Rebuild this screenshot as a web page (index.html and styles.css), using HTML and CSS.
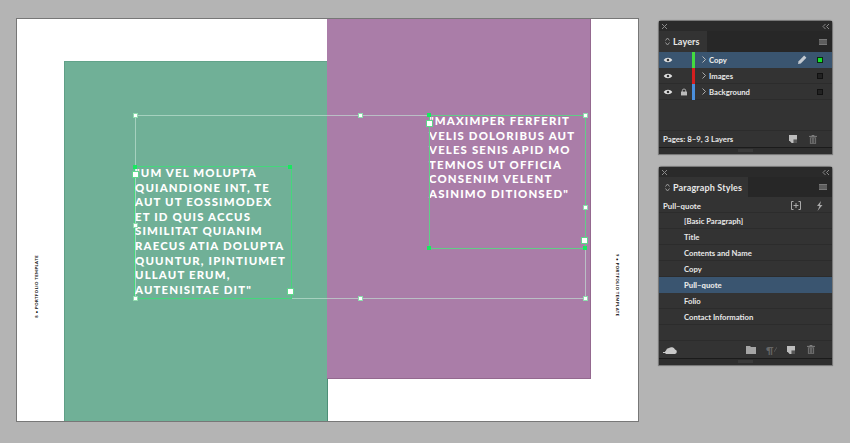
FILE: index.html
```html
<!DOCTYPE html>
<html lang="en">
<head>
<meta charset="utf-8">
<title>Pull-quote spread</title>
<link rel="stylesheet" href="styles.css">
</head>
<body>
<main class="workspace">
  <section class="spread">
    <div class="block block-green"></div>
    <div class="block block-purple"></div>
    <div class="folio folio-left">8 &bull; PORTFOLIO TEMPLATE</div>
    <div class="folio folio-right">9 &bull; PORTFOLIO TEMPLATE</div>

    <div class="group-frame"></div>
    <span class="h h-s g1"></span><span class="h h-s g2"></span><span class="h h-s g3"></span><span class="h h-s g4"></span><span class="h h-s g5"></span>

    <div class="quote quote-left">"UM VEL MOLUPTA<br>QUIANDIONE INT, TE<br>AUT UT EOSSIMODEX<br>ET ID QUIS ACCUS<br>SIMILITAT QUIANIM<br>RAECUS ATIA DOLUPTA<br>QUUNTUR, IPINTIUMET<br>ULLAUT ERUM,<br>AUTENISITAE DIT"</div>
    <div class="text-frame frame-left"></div>
    <span class="h h-d l1"></span><span class="h h-d l2"></span><span class="h h-s l3"></span><span class="h h-s l4"></span><span class="h h-l l5"></span><span class="h h-l l6"></span>

    <div class="quote quote-right">"MAXIMPER FERFERIT<br>VELIS DOLORIBUS AUT<br>VELES SENIS APID MO<br>TEMNOS UT OFFICIA<br>CONSENIM VELENT<br>ASINIMO DITIONSED"</div>
    <div class="text-frame frame-right"></div>
    <span class="h h-d r1"></span><span class="h h-s r2"></span><span class="h h-d r3"></span><span class="h h-d r4"></span><span class="h h-s r5"></span><span class="h h-l r6"></span><span class="h h-l r7"></span>
  </section>
</main>

<aside class="docks">
  <section class="panel panel-layers">
    <header class="panel-top">
      <svg class="ico" width="7" height="7" viewBox="0 0 7 7"><path d="M1 1l5 5M6 1L1 6" stroke="#8a8a8a" fill="none"/></svg>
      <svg class="ico" width="8" height="7" viewBox="0 0 8 7"><path d="M3.500 1L1 3.500 3.500 6M7 1L4.500 3.500 7 6" stroke="#8a8a8a" fill="none"/></svg>
    </header>
    <div class="tabs">
      <div class="tab tab-layers">
        <svg class="updown" width="5" height="9" viewBox="0 0 5 9"><path d="M.5 3.500L2.500 1l2 2.500M.5 5.500L2.500 8l2-2.500" stroke="#9a9a9a" fill="none"/></svg>
        <span>Layers</span>
      </div>
      <svg class="menu" width="8" height="6" viewBox="0 0 8 6"><rect width="8" height="6" fill="#777"/><path d="M0 2h8M0 4h8" stroke="#444"/></svg>
    </div>
    <div class="layer-row selected">
      <span class="eye-cell"><svg width="10" height="6" viewBox="0 0 11 7"><path d="M.5 3.500C3 0 8 0 10.500 3.500 8 7 3 7 .5 3.500z" fill="#e0e0e0"/><circle cx="5.500" cy="3.500" r="1.500" fill="#333"/></svg></span>
      <span class="lock-cell"></span>
      <span class="swatch c-green"></span>
      <svg class="chev" width="4" height="7" viewBox="0 0 4 7"><path d="M.5.500l3 3-3 3" stroke="#bbb" fill="none"/></svg>
      <span class="layer-name strong">Copy</span>
      <svg class="pen" width="9" height="9" viewBox="0 0 9 9"><path d="M0 9l.6-2.800L6.200.6l2.200 2.200L2.800 8.400z" fill="#c4cad1"/></svg>
      <span class="target on"></span>
    </div>
    <div class="layer-row">
      <span class="eye-cell"><svg width="10" height="6" viewBox="0 0 11 7"><path d="M.5 3.500C3 0 8 0 10.500 3.500 8 7 3 7 .5 3.500z" fill="#e0e0e0"/><circle cx="5.500" cy="3.500" r="1.500" fill="#333"/></svg></span>
      <span class="lock-cell"></span>
      <span class="swatch c-red"></span>
      <svg class="chev" width="4" height="7" viewBox="0 0 4 7"><path d="M.5.500l3 3-3 3" stroke="#aaa" fill="none"/></svg>
      <span class="layer-name">Images</span>
      <span class="target"></span>
    </div>
    <div class="layer-row">
      <span class="eye-cell"><svg width="10" height="6" viewBox="0 0 11 7"><path d="M.5 3.500C3 0 8 0 10.500 3.500 8 7 3 7 .5 3.500z" fill="#e0e0e0"/><circle cx="5.500" cy="3.500" r="1.500" fill="#333"/></svg></span>
      <span class="lock-cell"><svg width="6" height="8" viewBox="0 0 7 8"><path d="M1.500 4V2.500a2 2 0 0 1 4 0V4" stroke="#bbb" fill="none"/><rect y="3.500" width="7" height="4.500" fill="#bbb"/></svg></span>
      <span class="swatch c-blue"></span>
      <svg class="chev" width="4" height="7" viewBox="0 0 4 7"><path d="M.5.500l3 3-3 3" stroke="#aaa" fill="none"/></svg>
      <span class="layer-name">Background</span>
      <span class="target"></span>
    </div>
    <div class="spacer"></div>
    <footer class="panel-foot">
      <span class="foot-text">Pages: 8&ndash;9, 3 Layers</span>
      <svg class="new-ic" width="8" height="8" viewBox="0 0 9 9"><path d="M0 0h9v9H3L0 6z" fill="#bdbdbd"/><path d="M5 5h4v4H5z" fill="#555"/></svg>
      <svg class="trash-ic" width="8" height="9" viewBox="0 0 9 10"><path d="M3 .5h3M0 1.500h9" stroke="#888"/><path d="M1 2.500h7V10H1z" fill="#6c6c6c"/><path d="M3 3.500V9M6 3.500V9" stroke="#3a3a3a"/></svg>
    </footer>
    <div class="panel-grip"><span></span></div>
  </section>

  <section class="panel panel-styles">
    <header class="panel-top">
      <svg class="ico" width="7" height="7" viewBox="0 0 7 7"><path d="M1 1l5 5M6 1L1 6" stroke="#8a8a8a" fill="none"/></svg>
      <svg class="ico" width="8" height="7" viewBox="0 0 8 7"><path d="M3.500 1L1 3.500 3.500 6M7 1L4.500 3.500 7 6" stroke="#8a8a8a" fill="none"/></svg>
    </header>
    <div class="tabs tabs-styles">
      <div class="tab tab-styles">
        <svg class="updown" width="5" height="9" viewBox="0 0 5 9"><path d="M.5 3.500L2.500 1l2 2.500M.5 5.500L2.500 8l2-2.500" stroke="#9a9a9a" fill="none"/></svg>
        <span>Paragraph Styles</span>
      </div>
      <svg class="menu" width="8" height="6" viewBox="0 0 8 6"><rect width="8" height="6" fill="#777"/><path d="M0 2h8M0 4h8" stroke="#444"/></svg>
    </div>
    <div class="style-head">
      <span class="style-current">Pull&ndash;quote</span>
      <svg class="plus-ic" width="10" height="9" viewBox="0 0 10 9"><path d="M2.500.5H.5v8h2M7.500.5h2v8h-2M5 2v5M2.500 4.500h5" stroke="#aaa" fill="none"/></svg>
      <svg class="bolt-ic" width="7" height="10" viewBox="0 0 7 10"><path d="M5 0L1 5h2.500L1.500 10 6.500 4H4z" fill="#aaa"/></svg>
    </div>
    <ul class="style-list">
      <li>[Basic Paragraph]</li>
      <li>Title</li>
      <li>Contents and Name</li>
      <li>Copy</li>
      <li class="selected">Pull&ndash;quote</li>
      <li>Folio</li>
      <li>Contact Information</li>
    </ul>
    <div class="spacer"></div>
    <footer class="panel-foot foot-styles">
      <svg class="cloud-ic" width="14" height="8" viewBox="0 0 14 8"><path d="M3 8a2 2 0 0 1 0-3.500A3 3 0 0 1 6 2a4 4 0 0 1 6 1.500A2.300 2.300 0 0 1 12 8z" fill="#c8c8c8"/><path d="M0 6.500h3" stroke="#c8c8c8"/></svg>
      <svg class="folder-ic" width="10" height="8" viewBox="0 0 10 8"><path d="M0 0h4l1 1h5v7H0z" fill="#a5a5a5"/></svg>
      <span class="para-ic">&para;<svg width="5" height="7" viewBox="0 0 5 7"><path d="M0 7L4.500 0" stroke="#666" fill="none"/></svg></span>
      <svg class="new-ic2" width="8" height="8" viewBox="0 0 9 9"><path d="M0 0h9v9H3L0 6z" fill="#bdbdbd"/><path d="M5 5h4v4H5z" fill="#555"/></svg>
      <svg class="trash-ic2" width="8" height="9" viewBox="0 0 9 10"><path d="M3 .5h3M0 1.500h9" stroke="#888"/><path d="M1 2.500h7V10H1z" fill="#6c6c6c"/><path d="M3 3.500V9M6 3.500V9" stroke="#3a3a3a"/></svg>
    </footer>
    <div class="panel-grip"><span></span></div>
  </section>
</aside>
</body>
</html>
```
FILE: styles.css
```css
* { box-sizing: border-box; }
html, body { margin: 0; height: 100%; }
body {
  width: 850px;
  height: 443px;
  overflow: hidden;
  background: #b4b4b4;
  display: flex;
  font-family: "Lato", "Liberation Sans", sans-serif;
}
.workspace {
  width: 659px;
  padding: 19px 0 0 17px;
  flex: none;
}
.spread {
  position: relative;
  width: 621px;
  height: 402px;
  background: #fff;
  box-shadow: 0 0 0 1px #777;
}
.block { position: absolute; }
.block-green { left: 47px; top: 42px; width: 264px; height: 360px; background: #70b097; border-right: 1px solid #4d8f77; border-left: 1px solid #5f9f87; border-top: 1px solid #62a38a; }
.block-purple { left: 310px; top: 0; width: 264px; height: 360px; background: #aa7da8; border-right: 1px solid #94688f; border-bottom: 1px solid #94688f; }
.folio {
  position: absolute;
  writing-mode: vertical-rl;
  font-size: 4.100px;
  font-weight: 900;
  letter-spacing: .5px;
  line-height: 5px;
  color: #111;
  white-space: nowrap;
}
.folio-left { left: 17px; top: 236px; transform: rotate(180deg); }
.folio-right { left: 598px; top: 235px; }

.group-frame { position: absolute; left: 118px; top: 96px; width: 451px; height: 184px; border: 1px solid rgba(195, 228, 212, .65); }
.text-frame { position: absolute; border: 1px solid #45d77c; }
.frame-left { left: 117px; top: 147px; width: 158px; height: 133px; }
.frame-right { left: 412px; top: 96px; width: 157px; height: 134px; border-color: #62cc88; }

.quote {
  position: absolute;
  color: #fff;
  font-weight: 900;
  font-size: 11.400px;
  line-height: 14.600px;
  letter-spacing: 1.150px;
  white-space: nowrap;
}
.quote-left { left: 118px; top: 147px; }
.quote-right { left: 412px; top: 95px; line-height: 14.500px; }

.h { position: absolute; display: block; }
.h-s { width: 5px; height: 5px; background: #fff; border: 1px solid #8fdcae; margin: -2px 0 0 -2px; }
.h-d { width: 4px; height: 4px; background: #18e85f; margin: -2px 0 0 -2px; }
.h-l { width: 7px; height: 7px; background: #fff; border: 1px solid #5fd68b; margin: -3px 0 0 -3px; }
.g1 { left: 118px; top: 96px; }
.g2 { left: 343px; top: 96px; }
.g3 { left: 343px; top: 279px; }
.g4 { left: 568px; top: 279px; }
.g5 { left: 118px; top: 279px; }
.l1 { left: 118px; top: 148px; }
.l2 { left: 273px; top: 148px; }
.l3 { left: 118px; top: 206px; }
.l4 { left: 118px; top: 279px; }
.l5 { left: 118px; top: 155px; }
.l6 { left: 273px; top: 272px; }
.r1 { left: 412px; top: 96px; }
.r2 { left: 568px; top: 96px; }
.r3 { left: 412px; top: 229px; }
.r4 { left: 568px; top: 229px; }
.r5 { left: 568px; top: 188px; }
.r6 { left: 412px; top: 104px; }
.r7 { left: 567px; top: 221px; }

.docks {
  width: 173px;
  flex: none;
  padding-top: 21px;
  display: flex;
  flex-direction: column;
  gap: 13px;
}
.panel {
  display: flex;
  flex-direction: column;
  background: #333;
  border-radius: 3px 3px 0 0;
  box-shadow: 0 0 1px 1px rgba(60,60,60,.55);
  color: #e8e8e8;
  font-size: 8px;
  font-weight: 700;
}
.panel-layers { height: 133px; }
.panel-styles { height: 198px; }
.panel-top {
  height: 10px;
  background: #2a2a2a;
  display: flex;
  justify-content: space-between;
  align-items: center;
  padding: 0 2px 0 2px;
  flex: none;
}
.tabs {
  height: 21px;
  background: #272727;
  display: flex;
  justify-content: space-between;
  align-items: center;
  padding-right: 5px;
  flex: none;
}
.tabs-styles { height: 20px; }
.tab {
  height: 100%;
  background: #333;
  display: flex;
  align-items: center;
  gap: 3px;
  padding-left: 6px;
  font-size: 9px;
  font-weight: 700;
  letter-spacing: .15px;
}
.tab-layers { width: 48px; }
.tab-styles { width: 89px; }
.layer-row {
  height: 16px;
  display: flex;
  align-items: center;
  border-bottom: 1px solid #2c2c2c;
  background: #333;
  flex: none;
}
.layer-row.selected { background: #3a5570; border-bottom-color: #3a5570; }
.eye-cell { width: 17px; display: flex; justify-content: center; padding-left: 1px; }
.lock-cell { width: 16px; display: flex; justify-content: center; }
.swatch { width: 3px; height: 16px; margin-right: 7px; }
.c-green { background: #43dc3f; }
.c-red { background: #d41f1f; }
.c-blue { background: #4a8fdc; }
.chev { margin-right: 3px; }
.layer-name { font-size: 7.700px; }
.layer-name.strong { font-weight: 900; }
.pen { margin-left: auto; margin-right: 10px; }
.target { width: 6px; height: 6px; border: 1px solid #111; background: #262626; margin-left: auto; margin-right: 9px; }
.target.on { margin-left: 0; background: #17e02a; border: 1px solid #0b2c10; }
.layer-row:not(.selected) .target { background: #222; }
.spacer { flex: 1; }
.panel-foot {
  height: 17px;
  flex: none;
  display: flex;
  align-items: center;
  padding: 0 15px 0 4px;
  border-top: 1px solid #2c2c2c;
}
.foot-text { font-size: 7.800px; font-weight: 700; }
.new-ic { margin-left: auto; margin-right: 12px; }
.panel-grip {
  height: 7px;
  flex: none;
  background: #2e2e2e;
  border-top: 1px solid #1b1b1b;
  display: flex;
  justify-content: center;
}
.panel-grip span { width: 15px; height: 3px; margin-top: 1px; background: #3a3a3a; }
.style-head {
  height: 16px;
  flex: none;
  display: flex;
  align-items: center;
  padding: 2px 9px 0 4px;
  border-bottom: 1px solid #2c2c2c;
  font-size: 7.800px;
}
.plus-ic { margin-left: auto; margin-right: 15px; }
.style-list { list-style: none; margin: 0; padding: 0; }
.style-list li {
  height: 16px;
  line-height: 17px;
  padding-left: 25px;
  font-size: 7.700px;
  border-bottom: 1px solid #2c2c2c;
}
.style-list li.selected { background: #3a5570; border-bottom-color: #3a5570; font-weight: 900; }
.foot-styles { height: 18px; padding: 0 17px 0 4px; }
.folder-ic { margin-left: auto; margin-right: 10px; }
.para-ic { display: flex; align-items: center; color: #666; font-size: 10px; font-weight: 900; margin-right: 10px; width: 11px; }
.new-ic2 { margin-right: 12px; }
```
